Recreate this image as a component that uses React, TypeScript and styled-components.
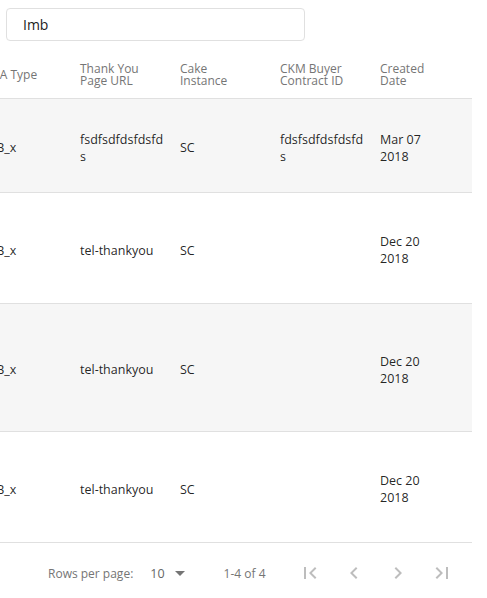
import * as React from "react";
import styled, { createGlobalStyle } from "styled-components";

const GlobalStyle = createGlobalStyle`
  body {
    margin: 0;
    background: #ffffff;
    font-family: "Open Sans", "Noto Sans", sans-serif;
  }
`;

const columns = [
  { key: "type", label: "CPA Type", width: 95 },
  { key: "url", label: "Thank You Page URL", width: 100 },
  { key: "cake", label: "Cake Instance", width: 100 },
  { key: "contract", label: "CKM Buyer Contract ID", width: 100 },
  { key: "created", label: "Created Date", width: 92 },
];

const rows = [
  { type: "MB_x", url: "fsdfsdfdsfdsfds", cake: "SC", contract: "fdsfsdfdsfdsfds", created: "Mar 07 2018", height: 94 },
  { type: "MB_x", url: "tel-thankyou", cake: "SC", contract: "", created: "Dec 20 2018", height: 111 },
  { type: "MB_x", url: "tel-thankyou", cake: "SC", contract: "", created: "Dec 20 2018", height: 128 },
  { type: "MB_x", url: "tel-thankyou", cake: "SC", contract: "", created: "Dec 20 2018", height: 111 },
];

const Page = styled.div`
  width: 487px;
`;

const Toolbar = styled.div`
  padding: 8px 0 11px 6px;
`;

const SearchInput = styled.input`
  box-sizing: border-box;
  width: 299px;
  height: 33px;
  border: 1px solid #e0e0e0;
  border-radius: 4px;
  padding: 0 0 0 16px;
  font-family: "Open Sans", "Noto Sans", sans-serif;
  font-size: 14px;
  color: #222222;
  outline: none;
`;

const Viewport = styled.div`
  width: 472px;
  overflow: hidden;
`;

const Table = styled.table`
  margin-left: -15px;
  width: 487px;
  table-layout: fixed;
  border-collapse: collapse;
`;

const HeadCell = styled.th`
  height: 46px;
  padding: 0 34px 0 0;
  text-align: left;
  vertical-align: middle;
  font-size: 12px;
  font-weight: 400;
  line-height: 12px;
  color: #757575;
  border-bottom: 1px solid #e0e0e0;
`;

const Row = styled.tr<{ $striped: boolean }>`
  background: ${(p) => (p.$striped ? "#f6f6f6" : "#ffffff")};
`;

const Cell = styled.td<{ $narrow?: boolean }>`
  padding: 4px ${(p) => (p.$narrow ? 42 : 15)}px 0 0;
  vertical-align: middle;
  font-size: 12.5px;
  line-height: 17px;
  color: rgba(0, 0, 0, 0.87);
  word-break: break-all;
  border-bottom: 1px solid #e0e0e0;
`;

const DateText = styled.span`
  word-break: normal;
`;

const Footer = styled.div`
  display: flex;
  align-items: center;
  height: 56px;
  padding: 2px 0 0 48px;
  font-size: 12px;
  color: #757575;
`;

const Caption = styled.span<{ $gap?: number }>`
  margin-right: ${(p) => p.$gap ?? 0}px;
  white-space: nowrap;
`;

const Select = styled.div`
  display: flex;
  align-items: center;
  gap: 3px;
  margin-right: 32px;
  font-size: 12.5px;
  color: #666666;
`;

const Actions = styled.div`
  display: flex;
  margin-left: 22px;
`;

const PageButton = styled.button`
  display: flex;
  align-items: center;
  justify-content: center;
  width: 44px;
  height: 44px;
  padding: 0;
  border: none;
  background: none;
  color: rgba(0, 0, 0, 0.26);
`;

const Icon = ({ d, color = "currentColor" }: { d: string; color?: string }) => (
  <svg width="24" height="24" viewBox="0 0 24 24" fill={color}>
    <path d={d} />
  </svg>
);

const icons = {
  dropDown: "M7 10l5 5 5-5z",
  first: "M18.41 16.59L13.82 12l4.59-4.59L17 6l-6 6 6 6zM6 6h2v12H6z",
  prev: "M15.41 7.41L14 6l-6 6 6 6 1.41-1.41L10.83 12z",
  next: "M10 6L8.59 7.41 13.17 12l-4.58 4.59L10 18l6-6z",
  last: "M5.59 7.41L10.18 12l-4.59 4.59L7 18l6-6-6-6zM16 6h2v12h-2z",
};

export default function App() {
  return (
    <Page>
      <GlobalStyle />
      <Toolbar>
        <SearchInput defaultValue="Imb" />
      </Toolbar>
      <Viewport>
        <Table>
          <colgroup>
            {columns.map((c) => (
              <col key={c.key} style={{ width: c.width }} />
            ))}
          </colgroup>
          <thead>
            <tr>
              {columns.map((c) => (
                <HeadCell key={c.key}>{c.label}</HeadCell>
              ))}
            </tr>
          </thead>
          <tbody>
            {rows.map((r, i) => (
              <Row key={i} $striped={i % 2 === 0} style={{ height: r.height }}>
                <Cell>{r.type}</Cell>
                <Cell>{r.url}</Cell>
                <Cell>{r.cake}</Cell>
                <Cell>{r.contract}</Cell>
                <Cell $narrow>
                  <DateText>{r.created}</DateText>
                </Cell>
              </Row>
            ))}
          </tbody>
        </Table>
      </Viewport>
      <Footer>
        <Caption $gap={17}>Rows per page:</Caption>
        <Select>
          <span>10</span>
          <Icon d={icons.dropDown} color="#757575" />
        </Select>
        <Caption>1-4 of 4</Caption>
        <Actions>
          <PageButton disabled>
            <Icon d={icons.first} />
          </PageButton>
          <PageButton disabled>
            <Icon d={icons.prev} />
          </PageButton>
          <PageButton disabled>
            <Icon d={icons.next} />
          </PageButton>
          <PageButton disabled>
            <Icon d={icons.last} />
          </PageButton>
        </Actions>
      </Footer>
    </Page>
  );
}
